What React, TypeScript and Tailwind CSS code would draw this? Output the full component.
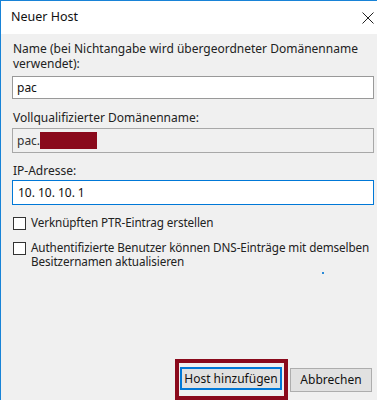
const font = { fontFamily: '"Noto Sans", "Liberation Sans", sans-serif' };

const CheckRow = ({ children, className }: { children: React.ReactNode; className: string }) => (
  <div className={`flex items-start ml-[1px] ${className}`}>
    <div className="mt-[2px] w-[13px] h-[13px] shrink-0 border border-[#333] bg-white" />
    <div className="ml-[5px] leading-[14px] text-[#222] whitespace-nowrap text-[11.7px] tracking-[-0.1px]">{children}</div>
  </div>
);

export default function App() {
  return (
    <div
      className="w-[377px] h-[400px] flex flex-col border-l border-t border-[#1883d7] bg-white text-[12px] overflow-hidden"
      style={font}
    >
      <div className="h-[33px] shrink-0 flex items-center justify-between bg-white pl-[10px] pr-[3px]">
        <span className="text-[12.5px] text-[#111]">Neuer Host</span>
        <svg width="12" height="12" viewBox="0 0 12 12">
          <path d="M0.5 0.5 L11.5 11.5 M11.5 0.5 L0.5 11.5" stroke="#222" strokeWidth="1" fill="none" />
        </svg>
      </div>

      <div className="flex-1 flex flex-col bg-[#f0f0f0] pl-[11px] pr-[3px] pt-[7px]">
        <div className="ml-[1px] leading-[15px] text-[#222]">
          <div>Name (bei Nichtangabe wird übergeordneter Domänenname</div>
          <div>verwendet):</div>
        </div>
        <div className="mt-[5px] h-[23px] flex items-center border border-[#999] bg-white pl-[4px] text-[#111]">
          pac
        </div>

        <div className="mt-[11px] ml-[1px] leading-[15px] text-[#222]">Vollqualifizierter Domänenname:</div>
        <div className="mt-[3px] h-[25px] flex items-center border border-[#a8a8a8] bg-[#f0f0f0] pl-[4px] text-[#333]">
          <span>pac.</span>
          <span className="w-[57px] h-[17px] bg-[#8a0a1c]" />
        </div>

        <div className="mt-[10px] ml-[1px] leading-[15px] text-[#222]">IP-Adresse:</div>
        <div className="mt-[2px] h-[25px] flex items-center border border-[#0078d7] bg-white pl-[5px] text-[#111]">
          <span>10.</span>
          <span className="ml-[3px]">10.</span>
          <span className="ml-[3px]">10.</span>
          <span className="ml-[3px]">1</span>
        </div>

        <CheckRow className="mt-[10px]">Verknüpften PTR-Eintrag erstellen</CheckRow>
        <CheckRow className="mt-[10px]">
          <div>Authentifizierte Benutzer können DNS-Einträge mit demselben</div>
          <div>Besitzernamen aktualisieren</div>
        </CheckRow>

        <div className="mt-[4px] ml-[310px] w-[2px] h-[2px] bg-[#2a8ad8]" />

        <div className="flex-1" />

        <div className="flex justify-end items-start pr-[2px]">
          <div className="h-[41px] border-4 border-[#8a0a1c] pl-[1px] pr-[2px] pt-[4px]">
            <button className="w-[102px] h-[23px] border-2 border-[#0078d7] bg-[#e1e1e1] text-[#111] leading-none">
              Host hinzufügen
            </button>
          </div>
          <button className="ml-[2px] mt-[9px] w-[82px] h-[24px] border border-[#adadad] bg-[#e1e1e1] text-[#111] leading-none">
            Abbrechen
          </button>
        </div>
      </div>
    </div>
  );
}
